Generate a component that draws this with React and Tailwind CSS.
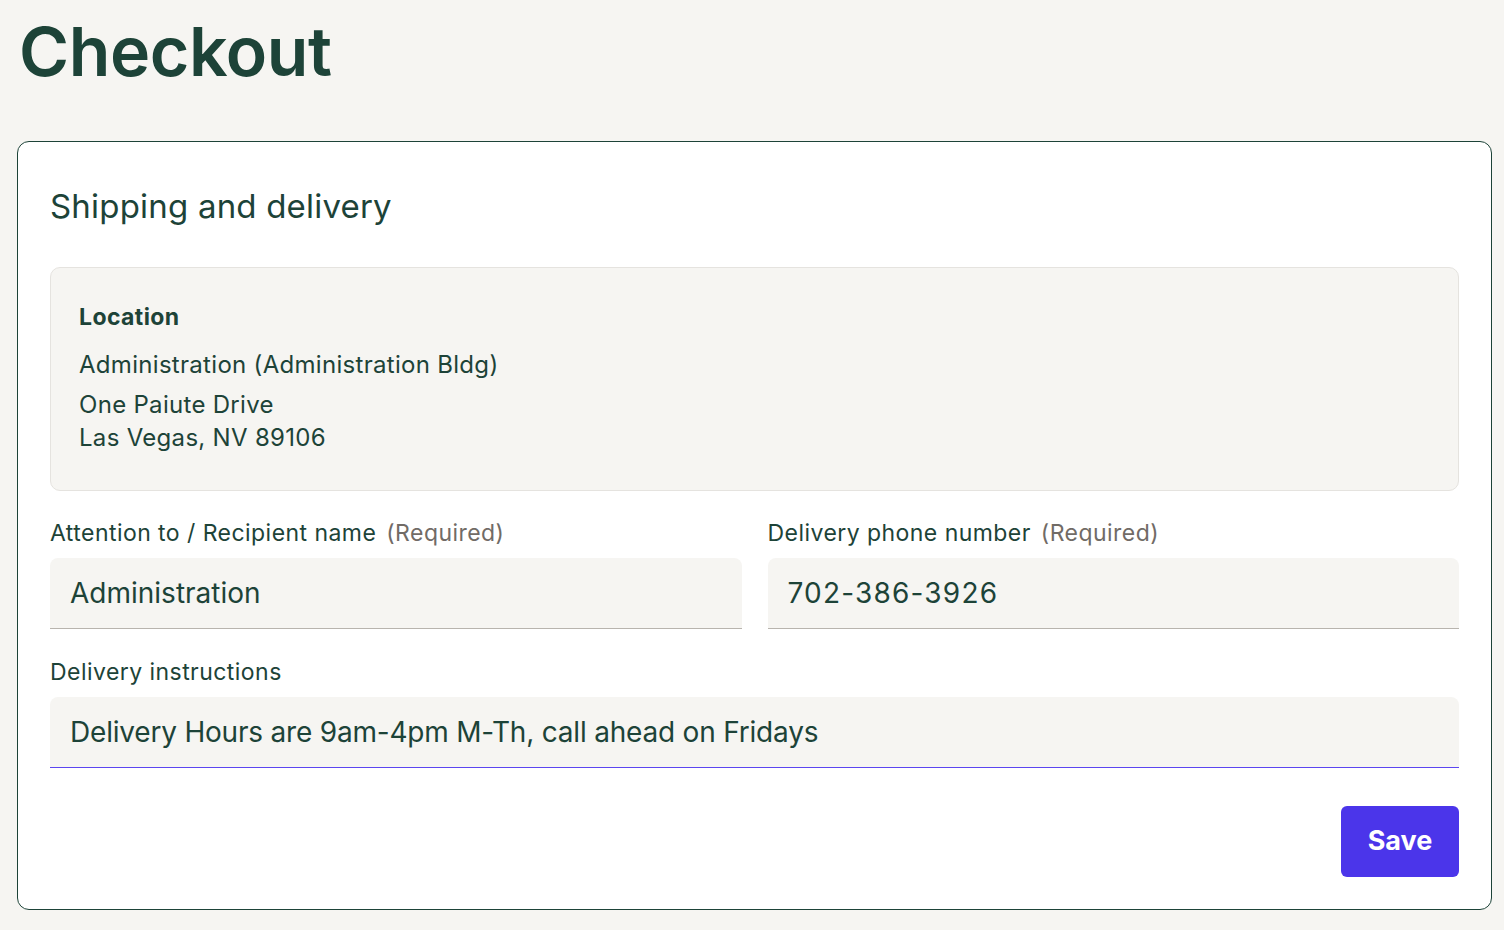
import React, { useState } from 'react';

const font = { fontFamily: 'Inter, "Liberation Sans", sans-serif' };

function Field({ label, required, value, onChange, inputClass }) {
  return (
    <label className="flex flex-col">
      <span className="text-[23px] leading-[28px] tracking-[0.45px] text-[#1d4338] mb-[11px]">
        {label}
        {required && <span className="text-[#716b66] ml-[10px]">(Required)</span>}
      </span>
      <input
        value={value}
        onChange={e => onChange(e.target.value)}
        className={inputClass}
      />
    </label>
  );
}

const baseInput = 'h-[71px] bg-[#f6f5f2] rounded-t-[8px] px-5 text-[28px] text-[#1d4338] outline-none';

export default function App() {
  const [name, setName] = useState('Administration');
  const [phone, setPhone] = useState('702-386-3926');
  const [notes, setNotes] = useState('Delivery Hours are 9am-4pm M-Th, call ahead on Fridays');

  return (
    <div className="min-h-screen bg-[#f6f5f2] pl-[17px] pr-[12px] pb-5" style={font}>
      <h1 className="text-[68px] leading-none font-semibold text-[#1d4338] pl-[2px] pt-[17px] tracking-[-0.4px]">Checkout</h1>
      <div className="mt-[56px] bg-white border border-[#1d4338] rounded-[12px] px-[32px] pt-[40px] pb-[32px]">
        <h2 className="text-[33px] leading-[48px] tracking-[0.2px] text-[#1d4338]">Shipping and delivery</h2>
        <div className="mt-[37px] bg-[#f6f5f2] border border-[#e5e3df] rounded-[10px] px-[28px] pt-[34px] pb-[36px] text-[#1d4338]">
          <div className="text-[23px] font-bold leading-[30px] tracking-[0.4px]">Location</div>
          <div className="text-[24px] leading-[32px] mt-[17px] tracking-[0.3px]">Administration (Administration Bldg)</div>
          <div className="text-[24px] leading-[33px] mt-[7px] tracking-[0.3px]">One Paiute Drive<br />Las Vegas, NV 89106</div>
        </div>
        <div className="grid grid-cols-2 gap-[26px] mt-[28px]">
          <Field label="Attention to / Recipient name" required value={name} onChange={setName}
            inputClass={`${baseInput} border-b border-[#b8b4ae]`} />
          <Field label="Delivery phone number" required value={phone} onChange={setPhone}
            inputClass={`${baseInput} border-b border-[#b8b4ae] tracking-[1.2px]`} />
        </div>
        <div className="mt-[29px]">
          <Field label="Delivery instructions" value={notes} onChange={setNotes}
            inputClass={`${baseInput} border-b border-[#5b46f0] tracking-[-0.2px]`} />
        </div>
        <div className="flex justify-end mt-[38px]">
          <button className="w-[118px] h-[71px] bg-[#4b35ea] rounded-[6px] text-white text-[27px] font-bold">Save</button>
        </div>
      </div>
    </div>
  );
}
